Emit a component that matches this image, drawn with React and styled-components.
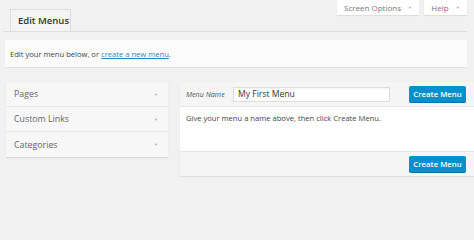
import styled, { createGlobalStyle } from 'styled-components';

const GlobalStyle = createGlobalStyle`
  body {
    margin: 0;
    background: #f1f1f1;
    font-family: "Open Sans", "Liberation Sans", sans-serif;
    color: #444;
    overflow: hidden;
  }
`;

const Page = styled.div`
  width: 474px;
  height: 228px;
  padding: 0 7px 0 3px;
  box-sizing: border-box;
`;

const ScreenMeta = styled.div`
  display: flex;
  justify-content: flex-end;
  gap: 5px;
  height: 15px;
  position: relative;
  z-index: 1;
`;

const MetaButton = styled.div`
  display: flex;
  align-items: center;
  justify-content: center;
  gap: 7px;
  width: ${p => p.$w}px;
  height: 15px;
  background: #fff;
  box-shadow: 0 1px 1px rgba(0, 0, 0, 0.08);
  font-size: 8px;
  color: #777;
`;

const Caret = styled.span`
  font-size: 4px;
  color: #aaa;
`;

const TabWrapper = styled.div`
  display: flex;
  margin-top: -6px;
  padding-left: 7px;
  border-bottom: 1px solid #ddd;
`;

const Tab = styled.div`
  display: flex;
  align-items: center;
  width: 61px;
  height: 22px;
  padding-left: 7px;
  box-sizing: border-box;
  border: 1px solid #ddd;
  border-bottom: none;
  background: #f4f4f4;
  font-size: 9.5px;
  font-weight: 600;
  color: #333;
`;

const Notice = styled.div`
  display: flex;
  align-items: center;
  height: 27px;
  margin: 8px 0 0 2px;
  padding-left: 5px;
  background: #fbfbfb;
  box-shadow: 0 1px 1px rgba(0, 0, 0, 0.06);
  font-size: 7.6px;
  color: #444;

  a {
    color: #2a8bc4;
    margin-left: 2px;
  }
`;

const Columns = styled.div`
  display: flex;
  align-items: flex-start;
  gap: 12px;
  margin-top: 15px;
  padding-left: 3px;
  margin-right: -17px;
`;

const Accordion = styled.div`
  width: 162px;
  flex-shrink: 0;
  background: #f7f7f7;
  box-shadow: 0 1px 1px rgba(0, 0, 0, 0.1);
`;

const Section = styled.div`
  display: flex;
  align-items: center;
  justify-content: space-between;
  height: 25px;
  padding: 0 10px 0 8px;
  border-bottom: 1px solid #e8e8e8;
  box-sizing: border-box;
  font-size: 8.8px;
  color: #666;

  &:last-child {
    border-bottom: none;
  }
`;

const MenuPanel = styled.div`
  flex: 1;
  background: #fff;
  box-shadow: 0 1px 1px rgba(0, 0, 0, 0.08);
`;

const Bar = styled.div`
  display: flex;
  align-items: center;
  height: 25px;
  padding: 0 18px 0 6px;
  background: #f5f5f5;
  border-${p => (p.$footer ? 'top' : 'bottom')}: 1px solid #e5e5e5;
  box-sizing: border-box;
  justify-content: ${p => (p.$footer ? 'flex-end' : 'flex-start')};
`;

const Label = styled.label`
  font-size: 7.2px;
  font-style: italic;
  color: #555;
  width: 47px;
`;

const NameInput = styled.input`
  width: 157px;
  height: 15px;
  padding: 0 4px;
  box-sizing: border-box;
  border: 1px solid #ddd;
  box-shadow: inset 0 1px 1px rgba(0, 0, 0, 0.04);
  font-family: inherit;
  font-size: 8.6px;
  color: #333;
  margin-right: auto;
  outline: none;
`;

const PrimaryButton = styled.button`
  width: 57px;
  height: 16px;
  padding: 0;
  border: none;
  border-radius: 2px;
  background: #0091cd;
  box-shadow: 0 1px 0 #0073aa;
  font-family: inherit;
  font-size: 7.8px;
  font-weight: 600;
  color: #fff;
`;

const Body = styled.div`
  height: 44px;
  padding: 6px 6px 0;
  box-sizing: border-box;
  font-size: 7.6px;
  color: #444;
`;

export default function App() {
  return (
    <Page>
      <GlobalStyle />
      <ScreenMeta>
        <MetaButton $w={82}>Screen Options <Caret>▼</Caret></MetaButton>
        <MetaButton $w={43}>Help <Caret>▼</Caret></MetaButton>
      </ScreenMeta>
      <TabWrapper>
        <Tab>Edit Menus</Tab>
      </TabWrapper>
      <Notice>
        Edit your menu below, or <a href="#">create a new menu</a>.
      </Notice>
      <Columns>
        <Accordion>
          {['Pages', 'Custom Links', 'Categories'].map(name => (
            <Section key={name}>
              {name}
              <Caret>▼</Caret>
            </Section>
          ))}
        </Accordion>
        <MenuPanel>
          <Bar>
            <Label>Menu Name</Label>
            <NameInput defaultValue="My First Menu" />
            <PrimaryButton>Create Menu</PrimaryButton>
          </Bar>
          <Body>Give your menu a name above, then click Create Menu.</Body>
          <Bar $footer>
            <PrimaryButton>Create Menu</PrimaryButton>
          </Bar>
        </MenuPanel>
      </Columns>
    </Page>
  );
}
